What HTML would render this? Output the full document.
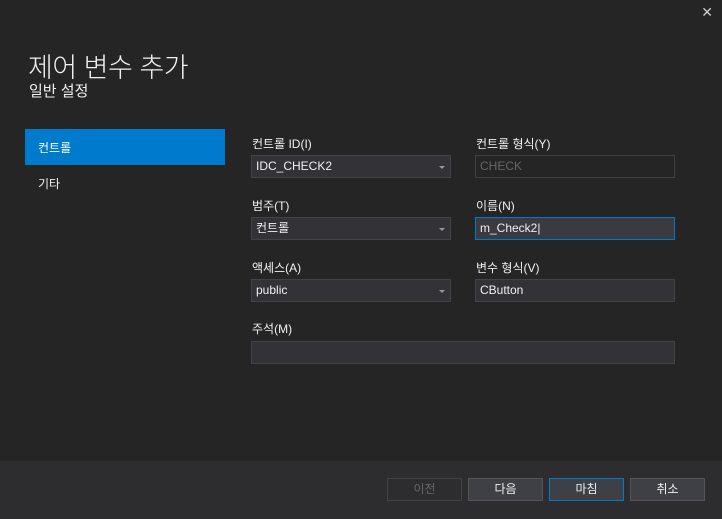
<!DOCTYPE html><html><head><style>
body{margin:0;width:722px;height:519px;background:#252526;font-family:"Liberation Sans","Noto Sans CJK KR",sans-serif;color:#f1f1f1;position:relative;overflow:hidden}
.a{position:absolute}
.lbl{position:absolute;font-size:12px;color:#f1f1f1}
.in{position:absolute;height:21px;background:#333337;border:1px solid #434346;font-size:12px;line-height:21px;padding-left:4px;box-sizing:content-box}
.dd:after{content:"";position:absolute;right:5px;top:10px;border-left:3px solid transparent;border-right:3px solid transparent;border-top:3px solid #999}
.btn{position:absolute;top:478px;width:73px;height:21px;background:#3f3f46;border:1px solid #555;font-size:12px;text-align:center;line-height:21px;color:#f1f1f1}
</style></head><body>
<div class="a" style="right:9px;top:4px;font-size:14px;color:#ccc">✕</div>
<div class="a" style="left:28px;top:46px;font-size:27px;font-weight:300;letter-spacing:-0.5px">제어 변수 추가</div>
<div class="a" style="left:29px;top:80px;font-size:15px">일반 설정</div>
<div class="a" style="left:25px;top:129px;width:200px;height:36px;background:#007acc"></div>
<div class="a" style="left:38px;top:139px;font-size:12px;color:#fff">컨트롤</div>
<div class="a" style="left:38px;top:175px;font-size:12px">기타</div>

<div class="lbl" style="left:252px;top:135px">컨트롤 ID(I)</div>
<div class="in dd" style="left:251px;top:155px;width:194px">IDC_CHECK2</div>
<div class="lbl" style="left:476px;top:135px">컨트롤 형식(Y)</div>
<div class="in" style="left:475px;top:155px;width:194px;background:#252526;border-color:#3f3f46;color:#656565">CHECK</div>

<div class="lbl" style="left:252px;top:197px">범주(T)</div>
<div class="in dd" style="left:251px;top:217px;width:194px">컨트롤</div>
<div class="lbl" style="left:476px;top:197px">이름(N)</div>
<div class="in" style="left:475px;top:217px;width:194px;border-color:#007acc;background:#3a3a40">m_Check2|</div>

<div class="lbl" style="left:252px;top:259px">액세스(A)</div>
<div class="in dd" style="left:251px;top:279px;width:194px">public</div>
<div class="lbl" style="left:476px;top:259px">변수 형식(V)</div>
<div class="in" style="left:475px;top:279px;width:194px">CButton</div>

<div class="lbl" style="left:252px;top:320px">주석(M)</div>
<div class="in" style="left:251px;top:341px;width:418px"></div>

<div class="a" style="left:0;top:461px;width:722px;height:58px;background:#2d2d30"></div>
<div class="btn" style="left:387px;background:#2d2d30;border-color:#434346;color:#656565">이전</div>
<div class="btn" style="left:468px">다음</div>
<div class="btn" style="left:549px;border-color:#007acc">마침</div>
<div class="btn" style="left:630px">취소</div>
</body></html>
